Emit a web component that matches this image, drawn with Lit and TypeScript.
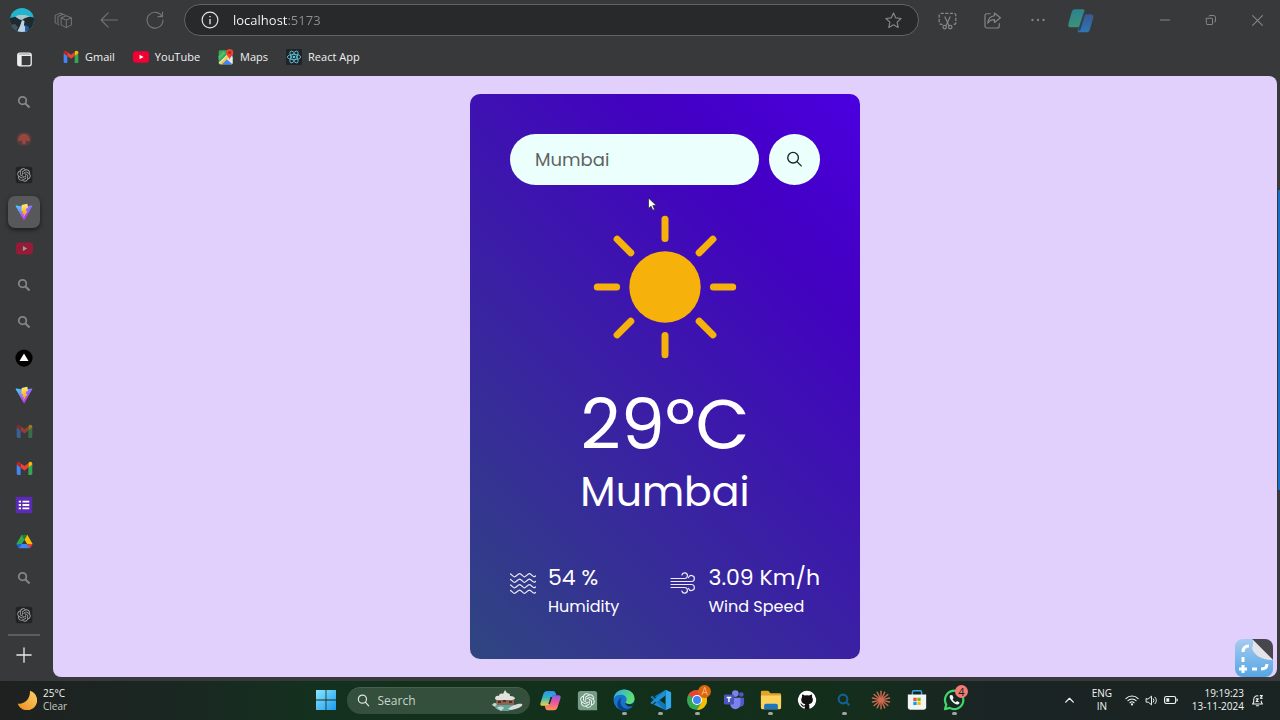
import { LitElement, html, svg, css, TemplateResult } from "lit";
import { customElement, state } from "lit/decorators.js";

type Glyph = TemplateResult;

const icon = (size: number, body: unknown, box = "0 0 24 24"): Glyph =>
  html`<svg width=${size} height=${size} viewBox=${box} fill="none" aria-hidden="true">${body}</svg>`;

const line = (size: number, d: string, width = 1.5): Glyph =>
  icon(size, svg`<path d=${d} stroke="currentColor" stroke-width=${width} stroke-linecap="round" stroke-linejoin="round"/>`);

/* ---------- brand glyphs ---------- */

const gmail = (size = 16) => icon(size, svg`
  <path d="M1 6v13a2 2 0 0 0 2 2h3.500V10.200z" fill="#4285f4"/>
  <path d="M17.500 21H21a2 2 0 0 0 2-2V6l-5.500 4.200z" fill="#34a853"/>
  <path d="M17.500 4.500v6L23 6.400V5.300c0-2.300-2.600-3.500-4.300-2.200z" fill="#fbbc04"/>
  <path d="M6.500 10.500v-6L12 8.600l5.500-4.100v6L12 14.700z" fill="#ea4335"/>
  <path d="M1 5.300v1.100l5.500 4.100v-6L5.300 3.100C3.600 1.800 1 3 1 5.300z" fill="#c5221f"/>`);

const youtube = (size = 16) => icon(size, svg`
  <rect x="0" y="3.500" width="24" height="17" rx="4" fill="#f00033"/>
  <path d="M9.800 8.500v7l6-3.500z" fill="#fff"/>`);

const maps = () => icon(16, svg`
  <rect x="1" y="2" width="21" height="21" rx="2" fill="#34a853"/>
  <path d="M1 20.500 16 6l6 6v9a2 2 0 0 1-2 2H3z" fill="#e8eaed"/>
  <path d="M5 23 13 15l8.500 7.800-1.500.2z" fill="#4285f4"/>
  <path d="M1 11 8 3l3.500 3.500L1 17z" fill="#57bb6a"/>
  <path d="M2 22 14.500 9.500l2.500 2.500L6 23z" fill="#fbc740"/>
  <path d="M17.500 0a5.500 5.500 0 0 0-5.500 5.500c0 4 4.500 5.500 5.500 10.500 1-5 5.500-6.500 5.500-10.500A5.500 5.500 0 0 0 17.500 0z" fill="#ea4335"/>
  <circle cx="17.500" cy="5.500" r="2" fill="#a52714"/>`);

const react = () => icon(16, svg`
  <rect width="24" height="24" rx="1" fill="#1f2328"/>
  <g stroke="#5fc4d8" stroke-width="1.300"><ellipse cx="12" cy="12" rx="10" ry="4"/>
  <ellipse cx="12" cy="12" rx="10" ry="4" transform="rotate(60 12 12)"/>
  <ellipse cx="12" cy="12" rx="10" ry="4" transform="rotate(120 12 12)"/></g>
  <circle cx="12" cy="12" r="2" fill="#5fc4d8"/>`);

const find = () => icon(14, svg`
  <circle cx="9.500" cy="9.500" r="6.500" stroke="#858687" stroke-width="3"/>
  <path d="m14 14 7.500 7.500" stroke="#858687" stroke-width="3.600"/>`);

const knot = (fill: string) => svg`<path fill=${fill} d="M22.2819 9.8211a5.9847 5.9847 0 0 0-.5157-4.9108 6.0462 6.0462 0 0 0-6.5098-2.9A6.0651 6.0651 0 0 0 4.9807 4.1818a5.9847 5.9847 0 0 0-3.9977 2.9 6.0462 6.0462 0 0 0 .7427 7.0966 5.98 5.98 0 0 0 .511 4.9107 6.051 6.051 0 0 0 6.5146 2.9001A5.9847 5.9847 0 0 0 13.2599 24a6.0557 6.0557 0 0 0 5.7718-4.2058 5.9894 5.9894 0 0 0 3.9977-2.9001 6.0557 6.0557 0 0 0-.7475-7.0729zm-9.022 12.6081a4.4755 4.4755 0 0 1-2.8764-1.0408l.1419-.0804 4.7783-2.7582a.7948.7948 0 0 0 .3927-.6813v-6.7369l2.02 1.1686a.071.071 0 0 1 .038.052v5.5826a4.504 4.504 0 0 1-4.4945 4.4944zm-9.6607-4.1254a4.4708 4.4708 0 0 1-.5346-3.0137l.142.0852 4.783 2.7582a.7712.7712 0 0 0 .7806 0l5.8428-3.3685v2.3324a.0804.0804 0 0 1-.0332.0615L9.74 19.9502a4.4992 4.4992 0 0 1-6.1408-1.6464zM2.3408 7.8956a4.485 4.485 0 0 1 2.3655-1.9728V11.6a.7664.7664 0 0 0 .3879.6765l5.8144 3.3543-2.0201 1.1685a.0757.0757 0 0 1-.071 0l-4.8303-2.7865A4.504 4.504 0 0 1 2.3408 7.872zm16.5963 3.8558L13.1038 8.364 15.1192 7.2a.0757.0757 0 0 1 .071 0l4.8303 2.7913a4.4944 4.4944 0 0 1-.6765 8.1042v-5.6772a.79.79 0 0 0-.407-.667zm2.0107-3.0231l-.142-.0852-4.7735-2.7818a.7759.7759 0 0 0-.7854 0L9.409 9.2297V6.8974a.0662.0662 0 0 1 .0284-.0615l4.8303-2.7866a4.4992 4.4992 0 0 1 6.6802 4.66zM8.3065 12.863l-2.02-1.1638a.0804.0804 0 0 1-.038-.0567V6.0742a4.4992 4.4992 0 0 1 7.3757-3.4537l-.142.0805L8.704 5.459a.7948.7948 0 0 0-.3927.6813zm1.0976-2.3654l2.602-1.4998 2.6069 1.4998v2.9994l-2.5974 1.4997-2.6067-1.4997Z"/>`;

const gpt = () => icon(18, svg`<rect x="1" y="1" width="22" height="22" rx="3" fill="#222324"/><g transform="translate(3 3) scale(.75)">${knot("#a0a1a2")}</g>`);

const vite = () => icon(18, svg`
  <defs>
    <linearGradient id="va" x1="2" y1="4" x2="14" y2="20" gradientUnits="userSpaceOnUse"><stop stop-color="#41d1ff"/><stop offset="1" stop-color="#bd34fe"/></linearGradient>
    <linearGradient id="vb" x1="12" y1="2" x2="13" y2="15" gradientUnits="userSpaceOnUse"><stop stop-color="#ffea83"/><stop offset="1" stop-color="#ffa800"/></linearGradient>
  </defs>
  <path d="M23 4.300 12.700 22.700a.7.700 0 0 1-1.200 0L1 4.300c-.3-.5.100-1.100.7-1l10.300 1.800 10.300-1.800c.6-.1 1 .5.7 1z" fill="url(#va)"/>
  <path d="m16.500 1-7.600 1.500-.5 8.500 2.100-.4-.6 4 2-.4-.8 5.300 5.500-9-2.400.3.900-3.900 2.200-.4z" fill="url(#vb)"/>`);

const redDot = () => icon(18, svg`
  <rect x="2" y="3" width="20" height="18" rx="8" fill="#553b3b"/>
  <path d="M4 14c0-5 3-9 8-9s8 4 8 9c-2 2-4 1-5 0l-1 5h-4l-1-5c-1 1-3 2-5 0z" fill="#94463f"/>`);

const vercel = () => icon(18, svg`<circle cx="12" cy="12" r="11.500" fill="#000"/><path d="m12 6 6 10H6z" fill="#fff"/>`);

const sheetList = () => icon(18, svg`
  <rect x="1" y="1" width="22" height="22" rx="1" fill="#5b2bb5"/>
  <path d="M5 7.500h3M5 12h3M5 16.500h3M10 7.500h9M10 12h9M10 16.500h9" stroke="#fff" stroke-width="2.600"/>`);

const drive = () => icon(17, svg`
  <path d="M8 2.500h8l-4 7z" fill="#188038"/>
  <path d="M8 2.500 .5 15.500l3.800 6L12 9.500z" fill="#34a853"/>
  <path d="m16 2.500 7.500 13h-7.800L12 9.500z" fill="#fbbc04"/>
  <path d="M.5 15.500 4.300 21.500 8.300 15.500z" fill="#1967d2"/>
  <path d="M8.300 15.500 4.300 21.500h15.400l-4-6z" fill="#4285f4"/>
  <path d="M23.500 15.500 19.700 21.500l-4-6z" fill="#ea4335"/>
  <path d="m12 10.500 3 5H9z" fill="#38393b"/>`);

const avatar = () => icon(24, svg`
  <defs><clipPath id="av"><circle cx="12" cy="12" r="12"/></clipPath></defs>
  <g clip-path="url(#av)"><rect width="24" height="24" fill="#22b4cc"/>
  <path d="M0 10 6 8.500l4 3.500 8-3.500 6 1V24H0z" fill="#1e2a30"/>
  <path d="m5 8.500 4-1.500 6 0 5 1.500-5 1.500-3 2-4-1.500z" fill="#a9c3c9"/>
  <path d="m12 12 2.500 1-.5 4 4 7H7l3-6z" fill="#b9d2e4"/>
  <path d="m15 17 4 2-1 5h-3z" fill="#2458a8"/>
  <path d="m0 17 5-1 3 3-2 5H0z" fill="#46525c"/></g>`);

const copilotDim = () => icon(27, svg`
  <defs><linearGradient id="cd" x1="0" y1="0" x2=".3" y2="1"><stop stop-color="#2c7f93"/><stop offset="1" stop-color="#3a9278"/></linearGradient>
  <linearGradient id="ce" x1="0" y1="0" x2="0" y2="1"><stop stop-color="#3b568f"/><stop offset="1" stop-color="#2c78b4"/></linearGradient></defs>
  <path d="M7 2h7c1.200 0 1.700.700 1.400 1.800L11.500 16c-.5 1.500-1.500 2-3 2H3.500C1.500 18 .7 16.800 1.200 15L4 5C4.600 3 5.500 2 7 2z" fill="url(#cd)"/>
  <path d="M17.500 6.500H21c2 0 2.800 1.200 2.300 3L20.500 19.500c-.6 2-1.500 3-3.500 3h-6c-1.200 0-1.700-.7-1.400-1.800L13.500 9c.6-1.800 2-2.500 4-2.500z" fill="url(#ce)"/>
  <path d="m15.800 5-5 16" stroke="#30414f" stroke-width="1.600"/>`);

const copilot = () => icon(21, svg`
  <defs><linearGradient id="ca" x1="0" y1="0" x2="0" y2="1"><stop stop-color="#2f8df5"/><stop offset=".45" stop-color="#31b5c0"/><stop offset="1" stop-color="#f5d042"/></linearGradient>
  <linearGradient id="cb" x1="0" y1="0" x2="0" y2="1"><stop stop-color="#8a5cf0"/><stop offset=".5" stop-color="#f0569a"/><stop offset="1" stop-color="#ff9350"/></linearGradient></defs>
  <path d="M16 23H9c-1.500 0-2.300-.8-2.700-2l-1-3h2.500c1.500 0 2.500-.8 3-2.300l2.700-8C14 6.400 14.800 6 16 6h5c2.200 0 3 1.200 2.500 3L20 20c-.7 2-2 3-4 3z" fill="url(#cb)"/>
  <path d="M8 1h7c1.500 0 2.300.8 2.700 2l1 3h-2.500c-1.500 0-2.500.8-3 2.300l-2.700 8c-.5 1.300-1.300 1.700-2.500 1.700H3C.8 18 0 16.800.5 15L4 4c.7-2 2-3 4-3z" fill="url(#ca)"/>
  <path d="m14 8-2.700 8H9.500L12 8z" fill="#16301e"/>`);

const gptTile = () => icon(21, svg`<path d="M4 1h16a3 3 0 0 1 3 3v19H4a3 3 0 0 1-3-3V4a3 3 0 0 1 3-3z" fill="#749b86"/><g transform="translate(3.600 3.600) scale(.7)">${knot("#eef5f0")}</g>`);

const edge = () => icon(22, svg`
  <defs><linearGradient id="ea" x1="0" y1="0" x2="1" y2=".4"><stop stop-color="#2aa7e8"/><stop offset="1" stop-color="#5fe06e"/></linearGradient></defs>
  <circle cx="12" cy="12" r="11.500" fill="#1672cc"/>
  <path d="M.6 10.500C1.500 4.500 6.300.5 12 .5c7 0 11.500 4.700 11.500 9.800 0 3.700-2.700 6.200-6.500 6.200-2 0-3.400-.7-3.400-1.700 0-.8 1.300-1.400 1.300-3.600C14.900 8.400 12 6.300 8.500 6.300 5 6.300 1.800 8 .6 10.500z" fill="url(#ea)"/>
  <path d="M9.200 9.500C6.500 14 8.500 21.300 16 21.600c2.600.1 4.500-1 5.500-2.400C19.500 22 16 23.500 12 23.500 7 23.500 4 19 5 15c.6-2.700 2.200-4.700 4.200-5.500z" fill="#0c3f86"/>
  <path d="M13.500 14.800c.8 1.500 6 3.500 9.500-.1.700 1.500-2 4.500-5 4.500-2.500 0-5-2-4.500-4.400z" fill="#12301d"/>`);

const vscode = () => icon(22, svg`
  <path d="M17 .8v22.400L23 20.500V3.500z" fill="#2fa8f0"/>
  <path d="M17 .8 6.500 10.500 2.500 7.400.8 8.300v.9L17 23.200v-6.300L5 7.900z" fill="#1177bb"/>
  <path d="M17 23.200 6.500 13.500l-4 3.100-1.700-.9v-.9L17 .8v6.300L4 16.900z" fill="#1f8fd6"/>`);

const chrome = () => icon(22, svg`
  <circle cx="12" cy="12" r="11" fill="#34a853"/>
  <path d="M12 12 2.500 6.500A11 11 0 0 1 21.500 6.500z" fill="#ea4335"/>
  <path d="M12 6.500h9.500A11 11 0 0 1 12 23l5-8.300z" fill="#fbbc04"/>
  <circle cx="12" cy="12" r="5.500" fill="#fff"/><circle cx="12" cy="12" r="4.300" fill="#4285f4"/>`);

const teams = () => icon(22, svg`
  <circle cx="13.500" cy="5" r="3.600" fill="#7b83eb"/><circle cx="20" cy="6" r="2.500" fill="#5059c9"/>
  <path d="M16 9.500h7v6a4 4 0 0 1-5 3.800z" fill="#5059c9"/>
  <path d="M8 9.500h11v7a5.500 5.500 0 0 1-11 0z" fill="#7b83eb"/>
  <rect x="1" y="6" width="11" height="11" rx="1.500" fill="#4b53bc"/>
  <path d="M4 9.300h5M6.500 9.300V14.300" stroke="#fff" stroke-width="1.500"/>`);

const folder = () => icon(22, svg`
  <path d="M1 3.500A1.500 1.500 0 0 1 2.500 2H9l2.500 2.500h10A1.500 1.500 0 0 1 23 6v10H1z" fill="#e0a526"/>
  <path d="M1 7h22v13.500a1.500 1.500 0 0 1-1.500 1.500h-19A1.500 1.500 0 0 1 1 20.500z" fill="#fbd25e"/>
  <path d="M4.500 22v-4A2 2 0 0 1 6.500 16h11a2 2 0 0 1 2 2v4z" fill="#1b76c0"/>`);

const github = () => icon(20, svg`
  <circle cx="12" cy="12" r="11" fill="#111"/>
  <path d="M12 1a11 11 0 0 0-3.500 21.400c.6.100.8-.2.800-.5v-2c-3.100.7-3.700-1.300-3.700-1.300-.5-1.300-1.200-1.600-1.200-1.600-1-.7.100-.7.100-.7 1.100.1 1.700 1.100 1.700 1.100 1 1.700 2.600 1.200 3.200.9.100-.7.400-1.200.7-1.500-2.400-.3-5-1.200-5-5.400 0-1.200.4-2.200 1.100-3-.1-.3-.5-1.400.1-2.900 0 0 .9-.3 3 1.100a10.500 10.500 0 0 1 5.500 0c2.100-1.400 3-1.100 3-1.100.6 1.500.2 2.600.1 2.900.7.800 1.100 1.800 1.100 3 0 4.200-2.600 5.100-5 5.400.4.300.8 1 .8 2v3c0 .3.200.7.800.6A11 11 0 0 0 12 1z" fill="#fff"/>`);

const finder = () => icon(16, svg`
  <circle cx="10.500" cy="10.500" r="6.500" stroke="#14618f" stroke-width="3.200"/>
  <path d="m15.500 15.500 4.500 4.500" stroke="#14618f" stroke-width="3.200"/>`);

const burst = () => icon(20, svg`<g stroke="#cf6a50" stroke-width="1.700" stroke-linecap="round">
  ${Array.from({ length: 14 }, (_, i) => svg`<path transform="rotate(${(i * 360) / 14} 12 12)" d="M12 10V1.500"/>`)}</g>
  <circle cx="12" cy="12" r="3" fill="#cf6a50"/>`);

const store = () => icon(22, svg`
  <path d="M7 7V3.500A1.500 1.500 0 0 1 8.500 2h7A1.500 1.500 0 0 1 17 3.500V7" stroke="#3aa5dc" stroke-width="1.600"/>
  <path d="M2 6h20v14a2.500 2.500 0 0 1-2.500 2.500h-15A2.500 2.500 0 0 1 2 20z" fill="#f2f4f5"/>
  <path d="M8 9.500h3.600v3.600H8z" fill="#f25022"/><path d="M12.400 9.500H16v3.600h-3.600z" fill="#7fba00"/>
  <path d="M8 13.900h3.600v3.600H8z" fill="#00a4ef"/><path d="M12.400 13.900H16v3.600h-3.600z" fill="#ffb900"/>`);

const whatsapp = () => icon(22, svg`
  <path d="M2.200 22 3.600 17a10 10 0 1 1 3.700 3.600z" stroke="#3fd66b" stroke-width="2.400" stroke-linejoin="round"/>
  <path d="M8.500 6.500c-1.800 1-1.800 3 .5 6s5.300 4.600 7 4.400c1.200-.2 2-1 2-2.200l-2.700-1.500-1.300 1.300c-1.500-.5-3-2-3.500-3.300l1-1.300-1.200-3z" fill="#e8fff0"/>`);

const castle = () => html`<svg width="34" height="22" viewBox="0 0 34 22" fill="none" aria-hidden="true">
  <ellipse cx="15" cy="17" rx="10" ry="4" fill="#5fa59b"/>
  <path d="M6 8h18v7H6z" fill="#8d6450"/>
  <path d="M5 9c0-3 2-4 4-3 0-2 2-3 4-2l2-4 2 3c2 0 3 1 3 3 3 0 5 1 5 3l-3 1H7z" fill="#dfe3dc"/>
  <path d="M8 12h3M13 11h3M19 12h3" stroke="#4c3226" stroke-width="2"/>
  <path d="M18 19c3-3 10-6 14-5 2 2-5 5-11 6z" fill="#d8dedb"/>
  <path d="M2 15c1-2 3-3 5-1l-2 3zM7 18c2-2 6-2 7 0l-3 3z" fill="#c7d5cd"/></svg>`;

const moon = () => icon(20, svg`
  <defs><linearGradient id="mo" x1="1" y1="0" x2="0" y2="1"><stop stop-color="#fbd36a"/><stop offset="1" stop-color="#f08a1c"/></linearGradient></defs>
  <path d="M15.500.8A12 12 0 1 1 .8 16.200C8 18 16.500 11 15.500.8z" fill="url(#mo)"/>`);

const windows = () => icon(20, svg`
  <defs><linearGradient id="wi" x1="0" y1="0" x2="24" y2="24" gradientUnits="userSpaceOnUse"><stop stop-color="#8be6fc"/><stop offset="1" stop-color="#1a9bf0"/></linearGradient></defs>
  <path d="M0 0h11.500v11.500H0zM12.500 0H24v11.500H12.500zM0 12.500h11.500V24H0zM12.500 12.500H24V24H12.500z" fill="url(#wi)"/>`);

const snip = () => icon(38, svg`
  <defs><linearGradient id="sn" x1="0" y1="0" x2="0" y2="1"><stop stop-color="#a6ccf0"/><stop offset="1" stop-color="#55a5e4"/></linearGradient></defs>
  <rect width="38" height="38" rx="8" fill="url(#sn)"/>
  <path d="M17 0h13a8 8 0 0 1 8 8v13z" fill="#49454d"/>
  <path d="M17 0c2 3 1 7 0 9 2 7 9 12 21 12z" fill="#e3e4ea"/>
  <path d="M8 13q0-6 6-6M8 18v5M8 26v8M4 30h8M17 30h5M26 30q6 0 6-5" stroke="#fff" stroke-width="3"/>`, "0 0 38 38");

/* ---------- weather glyphs ---------- */

const sun = () => icon(144, svg`
  <circle cx="72" cy="72" r="35.700" fill="#f6b10a"/>
  <g stroke="#f6b10a" stroke-width="7" stroke-linecap="round">
  ${[0, 45, 90, 135, 180, 225, 270, 315].map(a => svg`<path transform="rotate(${a} 72 72)" d="M72 4.300V23.600"/>`)}</g>`, "0 0 144 144");

const waves = () => icon(26, svg`<g stroke="#fff" stroke-opacity=".9" stroke-width="1.200" stroke-linecap="round" stroke-linejoin="round">
  ${[4, 9.500, 15, 20.500].map(y => svg`<path d="M.6 ${y}l2.800 2.400q1 .8 2 0L8.600 ${y}q1-.8 2 0l2.800 2.400q1 .8 2 0L18.400 ${y}q1-.8 2 0l2.800 2.400q1 .8 2.200-.4"/>`)}</g>`, "0 0 26 26");

const wind = () => icon(26, svg`<g stroke="#fff" stroke-opacity=".9" stroke-width="1.200" stroke-linecap="round">
  <path d="M1 8.500h13.500a2.800 2.800 0 1 0-2.600-3.500"/>
  <path d="M1 11.500h20.500a3 3 0 1 0-3-3.800"/>
  <path d="M1 14.500h20.500a3 3 0 1 1-3 3.800"/>
  <path d="M1 17.500h13.500a2.800 2.800 0 1 1-2.600 3.500"/></g>`, "0 0 26 26");

const lens = () => icon(17, svg`<circle cx="10" cy="9.500" r="7.500" stroke="#10262a" stroke-width="1.900"/><path d="m15.500 15 6 6" stroke="#10262a" stroke-width="1.900" stroke-linecap="round"/>`);

const tabs: { name: string; glyph: Glyph; dim?: boolean }[] = [
  { name: "Search tab", glyph: find() },
  { name: "News", glyph: redDot() },
  { name: "ChatGPT", glyph: gpt() },
  { name: "Weather app", glyph: vite() },
  { name: "YouTube", glyph: youtube(17), dim: true },
  { name: "Search tab", glyph: find() },
  { name: "Search tab", glyph: find() },
  { name: "Vercel", glyph: vercel() },
  { name: "Vite", glyph: vite() },
  { name: "Mail", glyph: gmail(17), dim: true },
  { name: "Gmail", glyph: gmail(17) },
  { name: "Forms", glyph: sheetList() },
  { name: "Drive", glyph: drive() },
  { name: "Search tab", glyph: find() },
  { name: "ChatGPT", glyph: gpt() },
];

const bookmarks = [
  { name: "Gmail", glyph: gmail() },
  { name: "YouTube", glyph: youtube() },
  { name: "Maps", glyph: maps() },
  { name: "React App", glyph: react() },
];

const apps: { name: string; glyph: Glyph; open?: boolean; badge?: string; tone?: string }[] = [
  { name: "Copilot", glyph: copilot() },
  { name: "ChatGPT", glyph: gptTile() },
  { name: "Edge", glyph: edge(), open: true },
  { name: "VS Code", glyph: vscode(), open: true },
  { name: "Chrome", glyph: chrome(), open: true, badge: "A", tone: "orange" },
  { name: "Teams", glyph: teams() },
  { name: "Explorer", glyph: folder(), open: true },
  { name: "GitHub", glyph: github() },
  { name: "Finder", glyph: finder(), open: true },
  { name: "Claude", glyph: burst() },
  { name: "Store", glyph: store() },
  { name: "WhatsApp", glyph: whatsapp(), open: true, badge: "4", tone: "coral" },
];

const base = css`
  * { box-sizing: border-box; }
  button { border: 0; padding: 0; margin: 0; background: none; color: inherit; font: inherit; display: grid; place-items: center; }
  input { border: 0; margin: 0; outline: 0; font: inherit; min-width: 0; }
  svg { display: block; }
`;

@customElement("weather-card")
class WeatherCard extends LitElement {
  @state() private city = "Mumbai";

  static styles = [base, css`
    :host { display: block; color: #fff; font-family: Poppins, Inter, sans-serif; }
    .card { display: flex; flex-direction: column; align-items: center; padding: 40px; border-radius: 10px; background: linear-gradient(45deg, #2f4680, #4300c2 78%, #4b00e0); }
    .search { display: flex; gap: 10px; }
    .box { width: 249px; height: 51px; border-radius: 26px; padding: 0 25px; background: #ebfffc; color: #626262; font-size: 18px; }
    .go { width: 51px; height: 51px; border-radius: 50%; background: #ebfffc; }
    .sun { margin: 30px 0 26px; }
    .temp { margin: 0; font-size: 70px; line-height: 80px; }
    .city { margin: 0; font-size: 41px; line-height: 54px; font-weight: 400; }
    .stats { display: flex; justify-content: space-between; width: 100%; margin: 42px 0 0; }
    .stat { display: flex; gap: 12px; align-items: flex-start; }
    .glyph { padding-top: 9px; }
    .value { font-size: 22px; line-height: 34px; }
    .label { font-size: 16px; line-height: 24px; }
  `];

  render() {
    return html`<article class="card">
      <form class="search" @submit=${(e: Event) => e.preventDefault()}>
        <input class="box" type="text" aria-label="City" .value=${this.city}
          @change=${(e: Event) => (this.city = (e.target as HTMLInputElement).value)}>
        <button class="go" aria-label="Search city">${lens()}</button>
      </form>
      <div class="sun">${sun()}</div>
      <p class="temp">29ºC</p>
      <h1 class="city">Mumbai</h1>
      <div class="stats">
        <div class="stat"><div class="glyph">${waves()}</div>
          <div><div class="value">54 %</div><div class="label">Humidity</div></div></div>
        <div class="stat"><div class="glyph">${wind()}</div>
          <div><div class="value">3.09 Km/h</div><div class="label">Wind Speed</div></div></div>
      </div>
    </article>`;
  }
}

@customElement("task-bar")
class TaskBar extends LitElement {
  static styles = [base, css`
    :host { display: block; color: #f2f4f3; font-family: "Open Sans", sans-serif; font-size: 10px; line-height: 13px; }
    .bar { display: grid; grid-template-columns: 1fr auto 1fr; align-items: center; height: 39px; padding-bottom: 1px; background: linear-gradient(90deg, #1e211f 0, #1b2622 12%, #14301f 24%, #12301a 45%, #142d1c 68%, #1b2424 77%, #1a2422 100%); }
    .weather { display: flex; gap: 6px; align-items: center; padding-left: 17px; text-align: left; justify-self: start; }
    .soft { color: #c4cac6; }
    .middle { display: flex; gap: 3px; align-items: center; }
    .start { width: 36px; height: 36px; }
    .find { display: flex; align-items: center; gap: 8px; width: 183px; height: 27px; padding: 0 6px 0 10px; border-radius: 14px; background: #34503c; border-top: 1px solid #47604d; }
    .find input { flex: 1; background: none; padding: 0; color: #d5dcd7; font-size: 12px; }
    .find input::placeholder { color: #c9d2cb; opacity: 1; }
    .apps { display: grid; grid-template-columns: repeat(12, 1fr); width: 440px; }
    .app { position: relative; height: 38px; }
    .open::after { content: ""; position: absolute; bottom: 4px; width: 5px; height: 3px; border-radius: 2px; background: #9da59f; }
    .badge { position: absolute; top: 4px; left: 19px; width: 13px; height: 13px; border-radius: 50%; text-align: center; }
    .orange { background: #d9660e; color: #ffb27a; }
    .coral { background: #ef7d74; color: #1c1c1c; font-size: 11px; }
    .tray { display: flex; align-items: center; justify-self: end; padding-right: 10px; }
    .up { width: 36px; height: 36px; }
    .lang { width: 28px; text-align: center; }
    .quick { display: flex; gap: 6px; align-items: center; padding: 0 14px 0 9px; }
    .clock { text-align: right; }
    .bell { width: 26px; }
  `];

  render() {
    return html`<footer class="bar">
      <button class="weather">${moon()}<span><div>25°C</div><div class="soft">Clear</div></span></button>
      <div class="middle">
        <button class="start" aria-label="Start">${windows()}</button>
        <label class="find">${icon(13, svg`<circle cx="10" cy="9.500" r="7.500" stroke="#dfe5e1" stroke-width="2.200"/><path d="m15.500 15 6 7" stroke="#dfe5e1" stroke-width="2.200" stroke-linecap="round"/>`)}
          <input type="text" placeholder="Search" aria-label="Search">${castle()}</label>
        <div class="apps">${apps.map(a => html`
          <button class="app ${a.open ? "open" : ""}" aria-label=${a.name}>${a.glyph}
            ${a.badge ? html`<span class="badge ${a.tone}">${a.badge}</span>` : ""}</button>`)}
        </div>
      </div>
      <div class="tray">
        <button class="up" aria-label="Hidden icons">${line(13, "m5 15 7-7 7 7", 2.4)}</button>
        <div class="lang"><div>ENG</div><div>IN</div></div>
        <div class="quick">
          ${icon(14, svg`<g stroke="currentColor" stroke-width="1.900" stroke-linecap="round"><path d="M1.500 9.500a15 15 0 0 1 21 0M5 13.200a10 10 0 0 1 14 0M8.500 16.700a5 5 0 0 1 7 0"/></g><circle cx="12" cy="19.500" r="1.800" fill="currentColor"/>`)}
          ${line(13, "M2 9v6h4l6 5V4L6 9zM15.500 9a5 5 0 0 1 0 6M18.500 6a9 9 0 0 1 0 12", 1.8)}
          ${icon(14, svg`<rect x="1" y="6" width="19" height="12" rx="3" stroke="currentColor" stroke-width="2"/><path d="M4 9h5v6H4z" fill="currentColor"/><path d="M22.500 10v4" stroke="currentColor" stroke-width="2"/>`)}
        </div>
        <div class="clock"><div>19:19:23</div><div>13-11-2024</div></div>
        <button class="bell" aria-label="Notifications">${line(13, "M13 3.500A6.500 6.500 0 0 0 5 10v5l-2 3.500h18L19 15v-2M10 21.500h4M9.500 9h4l-4 5h4M17 3h4l-4 5h4", 1.9)}</button>
      </div>
    </footer>`;
  }
}

@customElement("app-root")
class AppRoot extends LitElement {
  @state() private active = 3;

  static styles = [base, css`
    :host { display: block; font-family: "Open Sans", sans-serif; font-size: 11px; color: #f1f1f1; }
    .screen { position: relative; display: grid; grid-template-columns: 53px 1fr; grid-template-rows: 40px 36px 1fr 39px; min-height: 100vh; background: #38393b; }
    .tools { grid-column: 1 / -1; display: flex; align-items: center; color: #858687; }
    .tools button { width: 46px; height: 40px; }
    .tools .faint { color: #727374; }
    .tools .me { width: 44px; margin-right: -4px; }
    .tools .act { width: 45px; }
    .tools .pilot { width: 40px; margin-right: 42px; }
    .address { flex: 1; display: flex; align-items: center; gap: 14px; height: 32px; margin: 0 6px; padding: 0 15px 0 16px; border: 1px solid #636466; border-radius: 16px; background: #28292a; }
    .address input { flex: 1; padding: 0; font-size: 13px; color: transparent; background: linear-gradient(90deg, #fff 55px, #8f9091 55px); -webkit-background-clip: text; background-clip: text; }
    .side { grid-column: 1; grid-row: 2 / 4; display: flex; flex-direction: column; padding: 0 5px 7px 0; }
    .panel { height: 38px; color: #eee; }
    .tabs { flex: 1; display: grid; grid-auto-rows: 1fr; justify-items: center; padding-top: 6px; }
    .tab { width: 32px; height: 32px; align-self: center; border-radius: 7px; }
    .on { background: #57585a; box-shadow: 0 2px 4px #1c1c1d; }
    .dim { opacity: .5; }
    .rule { height: 2px; margin: 1px 8px 0; border: 0; background: #5c5d5e; }
    .add { height: 38px; color: #e6e6e6; }
    .marks { grid-column: 2; display: flex; align-items: center; gap: 18px; padding: 0 10px 2px; }
    .mark { display: flex; align-items: center; gap: 6px; color: inherit; text-decoration: none; line-height: 18px; }
    .page { grid-column: 2; display: grid; place-items: center; margin: 0 3px 4px 0; padding: 16px; border-radius: 8px; background: #e0d0fb; }
    .task { grid-column: 1 / -1; }
    .edge { position: absolute; right: 0; top: 190px; width: 2px; height: 300px; background: #1670c8; }
    .snip { position: absolute; right: 7px; bottom: 43px; }
    .pointer { position: absolute; left: 647px; top: 197px; }
  `];

  render() {
    return html`<div class="screen">
      <nav class="tools">
        <button class="me" aria-label="Profile">${avatar()}</button>
        <button class="faint" aria-label="Workspaces">${line(19, "M9 8.500l6.500-2.500 6.500 2.500v9L15.500 21 9 17.500zM9 8.500l6.500 3 6.500-3M15.500 11.500V21M6 17.500l-1-.5V7l6-2.800 3 .8M3 15.500 1.500 14.800V5.500l6-2.800 3 .8", 1.3)}</button>
        <button class="faint" aria-label="Back">${line(20, "M22 12H3M11 3.500 2.500 12l8.500 8.500", 1.4)}</button>
        <button class="faint" aria-label="Reload">${line(20, "M20.500 8A9.500 9.500 0 1 0 21.500 12M21 2.500V8h-5.500", 1.4)}</button>
        <div class="address">
          ${icon(18, svg`<circle cx="12" cy="12" r="10.500" stroke="#e4e4e4" stroke-width="1.600"/><path d="M12 10.500v7M12 6.500v1.800" stroke="#e4e4e4" stroke-width="1.800"/>`)}
          <input type="text" aria-label="Address" value="localhost:5173">
          ${line(19, "m12 2.500 2.900 6.200 6.700.8-5 4.600 1.300 6.700L12 17.500l-5.900 3.300 1.300-6.700-5-4.600 6.700-.8z", 1.5)}
        </div>
        <button class="act" aria-label="Screenshot">${icon(19, svg`<path d="M6 17H4A2.500 2.500 0 0 1 1.500 14.500v-9A2.500 2.500 0 0 1 4 3h16A2.500 2.500 0 0 1 22.500 5.500v9A2.500 2.500 0 0 1 20 17h-2" stroke="currentColor" stroke-width="1.600" stroke-dasharray="4 1.800"/><g stroke="currentColor" stroke-width="1.500"><path d="m8.500 7 5.500 11.500M15.500 7 10 18.500"/><circle cx="8.500" cy="20.300" r="2.200"/><circle cx="15.500" cy="20.300" r="2.200"/></g>`)}</button>
        <button class="act" aria-label="Share">${line(19, "M9 3.500H5A2.500 2.500 0 0 0 2.500 6v13A2.500 2.500 0 0 0 5 21.500h13a2.500 2.500 0 0 0 2.500-2.500v-3M14.500 2.500 22 8.500l-7.500 6V11c-4 0-6.500 1-8.500 4.500C6.500 10 9.500 6.500 14.500 6z", 1.5)}</button>
        <button class="act" aria-label="More">${icon(14, svg`<g fill="currentColor"><circle cx="2.500" cy="12" r="2"/><circle cx="12" cy="12" r="2"/><circle cx="21.500" cy="12" r="2"/></g>`)}</button>
        <button class="pilot" aria-label="Copilot">${copilotDim()}</button>
        <button aria-label="Minimise">${line(12, "M3 12h18", 2)}</button>
        <button aria-label="Restore">${line(12, "M3 8.500h11a1 1 0 0 1 1 1V20a1 1 0 0 1-1 1H4a1 1 0 0 1-1-1zM8 4q0-1 1.500-1H17q4 0 4 4v7.500q0 1.500-2 1.500", 2)}</button>
        <button aria-label="Close">${line(13, "m3 3 18 18M21 3 3 21", 2)}</button>
      </nav>
      <aside class="side">
        <button class="panel" aria-label="Tab pane">${icon(17, svg`<rect x="2.500" y="3" width="19" height="18" rx="3" stroke="currentColor" stroke-width="1.800"/><path d="M2.500 4.500h19V7h-19zM2.500 5h5.500v16h-5.500z" fill="currentColor"/>`)}</button>
        <div class="tabs">${tabs.map((t, i) => html`
          <button class="tab ${i === this.active ? "on" : ""}" aria-label=${t.name} @click=${() => (this.active = i)}>
            <span class=${t.dim ? "dim" : ""}>${t.glyph}</span></button>`)}
        </div>
        <hr class="rule">
        <button class="add" aria-label="New tab">${line(18, "M12 2.500v19M2.500 12h19", 1.8)}</button>
      </aside>
      <div class="marks">${bookmarks.map(b => html`<a class="mark" href="#">${b.glyph}${b.name}</a>`)}</div>
      <main class="page"><weather-card></weather-card></main>
      <task-bar class="task"></task-bar>
      <div class="edge"></div>
      <div class="snip">${snip()}</div>
      <div class="pointer">${icon(14, svg`<path d="M1.500 1v10.500l2.500-2.300 1.800 4 1.800-.8-1.800-3.900h3.500z" fill="#fff" stroke="#222" stroke-width=".7"/>`, "0 0 14 14")}</div>
    </div>`;
  }
}
